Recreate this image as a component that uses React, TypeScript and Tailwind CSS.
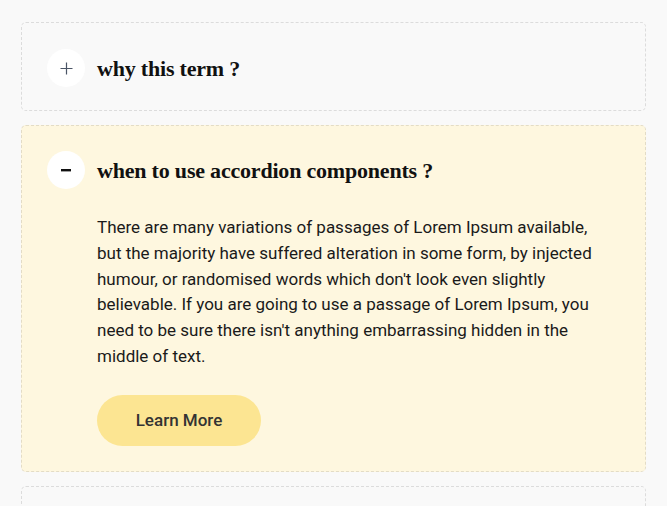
import React from "react";

export default function App() {
  return (
    <div className="min-h-[506px] w-full bg-[#f9f9f9] px-[21px] pt-[22px]">
      <div className="flex flex-col gap-[14px]">
        <div className="rounded-[5px] border border-dashed border-[#dcdcdc] px-[25px] pt-[26px] pb-[23px]">
          <div className="flex items-center gap-[12px]">
            <div className="flex h-[38px] w-[38px] items-center justify-center rounded-full bg-white">
              <svg width="13" height="13" viewBox="0 0 13 13">
                <path d="M6.5 0.5V12.5M0.5 6.5H12.5" stroke="#4a5566" strokeWidth="1.2" />
              </svg>
            </div>
            <h3 className="font-['Liberation_Serif',serif] text-[22px] font-bold text-[#111] tracking-[-0.2px]">
              why this term ?
            </h3>
          </div>
        </div>

        <div className="rounded-[5px] border border-dashed border-[#e3dcc6] bg-[#fef7df] px-[25px] pt-[25px] pb-[25px]">
          <div className="flex items-center gap-[12px]">
            <div className="flex h-[38px] w-[38px] items-center justify-center rounded-full bg-white">
              <svg width="10" height="3" viewBox="0 0 10 3">
                <rect x="0" y="0" width="10" height="2.4" fill="#111" />
              </svg>
            </div>
            <h3 className="font-['Liberation_Serif',serif] text-[22px] font-bold text-[#111] tracking-[-0.2px]">
              when to use accordion components ?
            </h3>
          </div>
          <div className="pl-[50px] pr-[20px] pt-[26px]">
            <p className="font-['Roboto',sans-serif] text-[17px] leading-[25.8px] text-[#1a1a1a]">
              There are many variations of passages of Lorem Ipsum available, but the majority have suffered alteration in some form, by injected humour, or randomised words which don't look even slightly believable. If you are going to use a passage of Lorem Ipsum, you need to be sure there isn't anything embarrassing hidden in the middle of text.
            </p>
            <button className="mt-[25px] h-[51px] w-[164px] rounded-full bg-[#fce592] font-['Roboto',sans-serif] text-[17px] font-medium text-[#333]">
              Learn More
            </button>
          </div>
        </div>

        <div className="h-[60px] rounded-[5px] border border-dashed border-[#dcdcdc]" />
      </div>
    </div>
  );
}
